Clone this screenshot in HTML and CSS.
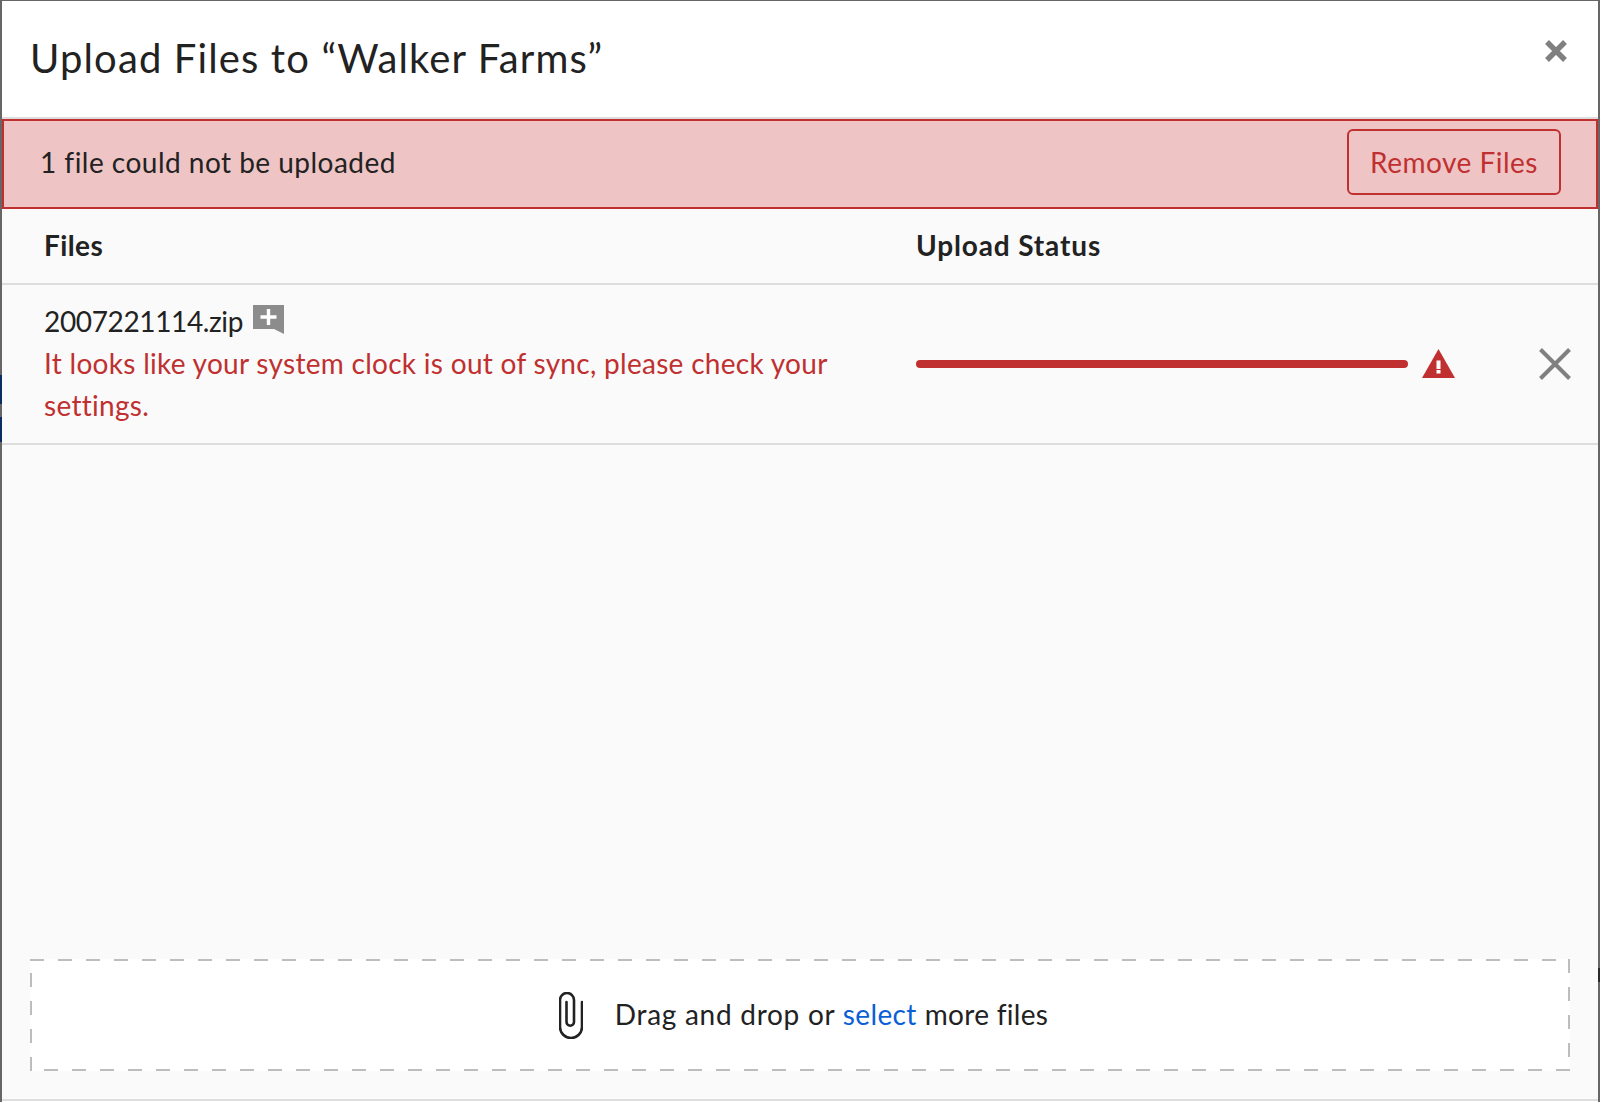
FILE: index.html
```html
<!DOCTYPE html>
<html lang="en">
<head>
<meta charset="utf-8">
<title>Upload Files</title>
<link rel="stylesheet" href="styles.css">
</head>
<body>
<div class="dialog">
  <span class="edge edge-a"></span>
  <span class="edge edge-b"></span>
  <span class="edge edge-c"></span>
  <header class="head">
    <h1 class="title">Upload Files to “Walker Farms”</h1>
    <button class="close-top" aria-label="Close">
      <svg width="24" height="24" viewBox="0 0 24 24"><path d="M3 3L21 21M21 3L3 21" stroke="#808080" stroke-width="5.4" fill="none"/></svg>
    </button>
  </header>
  <div class="banner">
    <span class="banner-text">1 file could not be uploaded</span>
    <button class="remove-btn">Remove Files</button>
  </div>
  <main class="content">
    <div class="cols col-head">
      <div class="col-files">Files</div>
      <div class="col-status">Upload Status</div>
    </div>
    <div class="cols file-row">
      <div class="col-files">
        <div class="file-name"><span class="file-label">2007221114.zip</span>
          <svg class="note" width="31" height="30" viewBox="0 0 31 30"><path d="M0 0H31V29L21 24H0Z" fill="#8c8c8c"/><path d="M15.500 4V20M7.500 12H23.500" stroke="#fff" stroke-width="3.400"/></svg>
        </div>
        <div class="file-error">It looks like your system clock is out of sync, please check your settings.</div>
      </div>
      <div class="col-status status-line">
        <div class="bar"></div>
        <svg class="warn" width="33" height="29" viewBox="0 0 33 29"><path d="M16.500 0L33 29H0Z" fill="#c03030"/><path d="M14.500 11.500h4v8.500h-4zM14.500 21h4v3.500h-4z" fill="#fff"/></svg>
      </div>
      <button class="row-x" aria-label="Remove">
        <svg width="32" height="32" viewBox="0 0 32 32"><path d="M1.500 1.500L30.500 30.500M30.500 1.500L1.500 30.500" stroke="#808080" stroke-width="4" fill="none"/></svg>
      </button>
    </div>
    <div class="drop-wrap">
      <div class="drop">
        <svg class="clip" width="24" height="47" viewBox="0 0 24 47"><path d="M7.500 10V30A3.750 3.750 0 0 0 15 30V8A7 7 0 0 0 1 8V35A11 11 0 0 0 23 35V10" fill="none" stroke="#222" stroke-width="2.600" stroke-linecap="round"/></svg>
        <span class="drop-text">Drag and drop or <a class="link" href="#">select</a> <span class="drop-tail">more files</span></span>
      </div>
    </div>
  </main>
</div>
</body>
</html>
```

FILE: styles.css
```css
* { box-sizing: border-box; }
html, body { margin: 0; height: 100%; }
body {
  font-family: Lato, "Noto Sans", sans-serif;
  color: #222;
  background: #fff;
  overflow: hidden;
}
.dialog {
  position: relative;
  height: 1102px;
  display: flex;
  flex-direction: column;
  border-top: 1px solid #666;
  border-left: 2px solid #666;
  border-right: 2px solid #666;
}
.edge { position: absolute; width: 2px; }
.edge-a { left: -2px; top: 374px; height: 29px; background: #0b2d63; }
.edge-b { left: -2px; top: 416px; height: 25px; background: #0b2d63; }
.edge-c { right: -2px; top: 967px; height: 14px; background: #2a2a2a; }
.head {
  height: 118px;
  flex: none;
  display: flex;
  justify-content: space-between;
  align-items: flex-start;
  background: #fff;
  border-bottom: 2px solid #ddd;
}
.title {
  margin: 33px 0 0 28px;
  font-size: 40px;
  line-height: 48px;
  letter-spacing: 1.13px;
  font-weight: 400;
  color: #222;
}
.close-top {
  margin: 38px 30px 0 0;
  padding: 0;
  width: 24px;
  height: 24px;
  border: 0;
  background: none;
  display: block;
}
.close-top svg, .row-x svg { display: block; }
.banner {
  height: 90px;
  flex: none;
  display: flex;
  justify-content: space-between;
  align-items: center;
  padding: 0 35px 4px 36px;
  background: #eec4c5;
  border: 2px solid #c03030;
}
.banner-text { font-size: 28px; letter-spacing: 0.48px; color: #222; }
.remove-btn {
  width: 214px;
  height: 66px;
  font: 400 28px Lato, "Noto Sans", sans-serif;
  letter-spacing: 0.5px;
  color: #c03030;
  background: none;
  border: 2px solid #c03030;
  border-radius: 6px;
  padding: 0;
}
.content {
  flex: 1;
  display: flex;
  flex-direction: column;
  background: #fafafa;
  border-bottom: 2px solid #ddd;
  margin-bottom: 1px;
}
.cols { display: flex; border-bottom: 2px solid #ddd; }
.col-files { width: 914px; padding-left: 42px; flex: none; }
.col-status { flex: 1; }
.col-head {
  height: 76px;
  align-items: center;
  font-size: 28px;
  font-weight: 700;
  color: #222;
  padding-bottom: 2px;
}
.col-head .col-files { letter-spacing: 0.4px; }
.col-head .col-status { letter-spacing: 0.86px; }
.file-row {
  height: 160px;
  position: relative;
  font-size: 28px;
  line-height: 42px;
}
.file-row .col-files { padding-top: 15px; padding-right: 70px; }
.file-name { display: flex; align-items: flex-start; gap: 10px; color: #222; }
.file-label { letter-spacing: -0.36px; }
.note { margin-top: 5px; }
.file-error { color: #c03030; letter-spacing: 0.29px; }
.status-line {
  display: flex;
  align-items: center;
  gap: 14px;
  height: 158px;
}
.bar {
  width: 492px;
  height: 8px;
  border-radius: 4px;
  background: #c03030;
}
.warn { margin-bottom: 2px; }
.row-x {
  position: absolute;
  right: 27px;
  top: 63px;
  padding: 0;
  border: 0;
  background: none;
}
.drop-wrap {
  margin-top: auto;
  padding: 0 28px 28px;
}
.drop {
  height: 112px;
  display: flex;
  align-items: center;
  justify-content: center;
  gap: 32px;
  padding-left: 7px;
  background-color: #fff;
  background-image:
    repeating-linear-gradient(90deg, #bdbdbd 0 14px, transparent 14px 28px),
    repeating-linear-gradient(90deg, transparent 0 14px, #bdbdbd 14px 28px),
    repeating-linear-gradient(180deg, transparent 0 14px, #bdbdbd 14px 28px),
    repeating-linear-gradient(180deg, #bdbdbd 0 14px, transparent 14px 28px);
  background-size: 100% 2px, 100% 2px, 2px 100%, 2px 100%;
  background-position: 0 0, 0 100%, 0 0, 100% 0;
  background-repeat: no-repeat;
}
.drop-text { font-size: 28px; letter-spacing: 0.72px; color: #222; margin-bottom: 2px; }
.drop-tail { letter-spacing: 0.3px; }
.clip { display: block; }
.link { color: #0a5fd6; text-decoration: none; letter-spacing: 0.4px; }
```
